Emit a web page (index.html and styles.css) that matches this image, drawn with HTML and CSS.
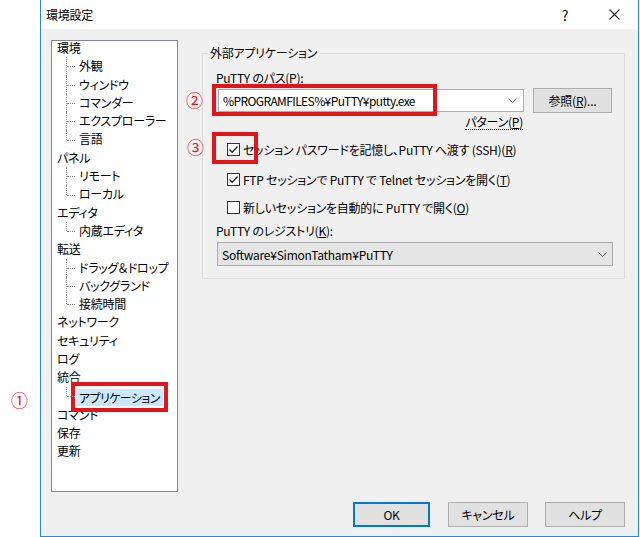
FILE: index.html
```html
<!DOCTYPE html>
<html lang="ja">
<head>
    <meta charset="utf-8">
    <title>環境設定</title>
    <link rel="stylesheet" href="styles.css">
</head>
<body>

<div class="screen">

    <!-- Dialog window -->
    <div class="window">
        <div class="titlebar">
            <span class="title">環境設定</span>
            <span class="help">?</span>
            <span class="close">
                <svg width="11" height="11" viewBox="0 0 11 11"><path d="M0.5 0.5 L10.5 10.5 M10.5 0.5 L0.5 10.5" stroke="#222" stroke-width="1.1" fill="none"/></svg>
            </span>
        </div>

        <div class="main">
            <!-- Settings tree -->
            <div class="tree">
                <ul>
                    <li><span class="item">環境</span>
                        <ul class="sub">
                            <li><span class="item">外観</span></li>
                            <li><span class="item">ウィンドウ</span></li>
                            <li><span class="item">コマンダー</span></li>
                            <li><span class="item">エクスプローラー</span></li>
                            <li><span class="item">言語</span></li>
                        </ul>
                    </li>
                    <li><span class="item">パネル</span>
                        <ul class="sub">
                            <li><span class="item">リモート</span></li>
                            <li><span class="item">ローカル</span></li>
                        </ul>
                    </li>
                    <li><span class="item">エディタ</span>
                        <ul class="sub">
                            <li><span class="item">内蔵エディタ</span></li>
                        </ul>
                    </li>
                    <li><span class="item">転送</span>
                        <ul class="sub">
                            <li><span class="item">ドラッグ＆ドロップ</span></li>
                            <li><span class="item">バックグランド</span></li>
                            <li><span class="item">接続時間</span></li>
                        </ul>
                    </li>
                    <li><span class="item">ネットワーク</span></li>
                    <li><span class="item">セキュリティ</span></li>
                    <li><span class="item">ログ</span></li>
                    <li><span class="item">統合</span>
                        <ul class="sub">
                            <li><span class="item selected">アプリケーション<span class="redbox box-tree"></span></span></li>
                        </ul>
                    </li>
                    <li><span class="item">コマンド</span></li>
                    <li><span class="item">保存</span></li>
                    <li><span class="item">更新</span></li>
                </ul>
            </div>

            <!-- External application settings -->
            <fieldset class="group">
                <legend>外部アプリケーション</legend>
                <div class="fields">
                    <div class="label label-path">PuTTY のパス(<u>P</u>):</div>
                    <div class="path-row">
                        <div class="combo combo-edit">
                            <span class="combo-text path-text">%PROGRAMFILES%¥PuTTY¥putty.exe</span>
                            <svg class="chevron" width="9" height="5" viewBox="0 0 9 5"><path d="M0.5 0.5 L4.5 4.5 L8.5 0.5" stroke="#555" fill="none"/></svg>
                        </div>
                        <button class="btn btn-browse">参照(<u>R</u>)...</button>
                        <span class="redbox box-path"></span>
                    </div>
                    <div class="pattern-row"><span class="pattern">パターン(<u>P</u>)</span></div>

                    <div class="check check-1">
                        <svg class="cb" width="13" height="13" viewBox="0 0 13 13"><rect x="0.5" y="0.5" width="12" height="12" fill="#fff" stroke="#333"/><path d="M2.5 6.5 L5.2 9.2 L10.5 3.5" stroke="#222" stroke-width="1.3" fill="none"/></svg>
                        <span>セッション パスワードを記憶し、PuTTY へ渡す (SSH)(<u>R</u>)</span>
                        <span class="redbox box-check"></span>
                    </div>
                    <div class="check check-2">
                        <svg class="cb" width="13" height="13" viewBox="0 0 13 13"><rect x="0.5" y="0.5" width="12" height="12" fill="#fff" stroke="#333"/><path d="M2.5 6.5 L5.2 9.2 L10.5 3.5" stroke="#222" stroke-width="1.3" fill="none"/></svg>
                        <span>FTP セッションで PuTTY で Telnet セッションを開く(<u>T</u>)</span>
                    </div>
                    <div class="check check-3">
                        <svg class="cb" width="13" height="13" viewBox="0 0 13 13"><rect x="0.5" y="0.5" width="12" height="12" fill="#fff" stroke="#333"/></svg>
                        <span>新しいセッションを自動的に PuTTY で開く(<u>O</u>)</span>
                    </div>

                    <div class="label label-reg">PuTTY のレジストリ(<u>K</u>):</div>
                    <div class="combo combo-list">
                        <span class="combo-text">Software¥SimonTatham¥PuTTY</span>
                        <svg class="chevron" width="9" height="5" viewBox="0 0 9 5"><path d="M0.5 0.5 L4.5 4.5 L8.5 0.5" stroke="#555" fill="none"/></svg>
                    </div>
                </div>
            </fieldset>
        </div>

        <!-- Dialog buttons -->
        <div class="buttons">
            <button class="btn btn-ok">OK</button>
            <button class="btn btn-cancel">キャンセル</button>
            <button class="btn btn-help">ヘルプ</button>
        </div>
    </div>

    <!-- Annotation marks -->
    <span class="mark mark-1">①</span>
    <span class="mark mark-2">②</span>
    <span class="mark mark-3">③</span>

</div>

</body>
</html>
```

FILE: styles.css
```css
body {
    margin: 0;
    background-color: #fff;
    font-family: "Noto Sans CJK JP", "Noto Sans", sans-serif;
    font-size: 12px;
    font-feature-settings: "palt";
    letter-spacing: -0.25px;
    color: #000;
}

.screen {
    position: relative;
    width: 640px;
    height: 537px;
    overflow: hidden;
}

.window {
    box-sizing: border-box;
    margin-left: 40px;
    width: 599px;
    height: 537px;
    border: 1px solid #2b86d6;
    border-top: none;
    background-color: #f0f0f0;
    display: flex;
    flex-direction: column;
}

/* Title bar */
.titlebar {
    height: 29px;
    background-color: #fff;
    display: flex;
    align-items: center;
}

.title {
    padding-left: 5px;
    flex: 1;
}

.help {
    font-size: 14px;
    width: 20px;
    text-align: center;
    margin-right: 34px;
}

.close {
    display: flex;
    margin-right: 18px;
}

/* Main area */
.main {
    display: flex;
    align-items: flex-start;
    padding: 11px 13px 0 10px;
}

.tree {
    box-sizing: border-box;
    width: 127px;
    height: 452px;
    border: 1px solid #828790;
    background-color: #fff;
    flex-shrink: 0;
}

.tree ul {
    list-style: none;
    margin: -2px 0 0 0;
    padding: 0 0 0 2px;
}

.tree li {
    line-height: 18.3px;
}

.tree ul.sub {
    margin: 0;
    padding: 0;
}

.tree ul.sub li {
    position: relative;
    padding-left: 22px;
}

.tree ul.sub li::before {
    content: "";
    position: absolute;
    left: 12px;
    top: 0;
    height: 100%;
    border-left: 1px dotted #9a9a9a;
}

.tree ul.sub li:last-child::before {
    height: 50%;
}

.tree ul.sub li::after {
    content: "";
    position: absolute;
    left: 13px;
    top: 50%;
    width: 8px;
    border-top: 1px dotted #9a9a9a;
}

.item {
    display: inline-block;
    padding: 0 3px;
    white-space: nowrap;
}

.item.selected {
    position: relative;
    background-color: #cce8ff;
    line-height: 17px;
    vertical-align: middle;
    letter-spacing: -0.6px;
}

/* Group box */
.group {
    margin: 5px 0 0 24px;
    padding: 0 11px 12px 5px;
    border: 1px solid #dcdcdc;
    flex: 1;
    min-width: 0;
}

.group legend {
    padding: 0 2px;
    line-height: 16px;
}

.fields {
    padding-left: 8px;
}

.label {
    line-height: 16px;
}

.label-path {
    margin-top: 9px;
}

.path-row {
    position: relative;
    display: flex;
    align-items: center;
    height: 25px;
    margin-top: 2px;
    margin-left: 2px;
}

.combo {
    box-sizing: border-box;
    display: flex;
    align-items: center;
    justify-content: space-between;
    padding: 0 6px 0 4px;
}

.path-text {
    letter-spacing: -0.6px;
}

.combo-edit {
    width: 306px;
    height: 23px;
    border: 1px solid #abadb3;
    background-color: #fff;
}

.combo-list {
    margin: 3px 0 0 1px;
    height: 24px;
    border: 1px solid #acacac;
    background-color: #e5e5e5;
    padding-right: 5px;
}

.btn {
    box-sizing: border-box;
    height: 25px;
    border: 1px solid #adadad;
    background-color: #e1e1e1;
    font-family: inherit;
    font-size: 12px;
    font-feature-settings: "palt";
    letter-spacing: -0.25px;
    color: #000;
    padding: 0;
}

.btn-browse {
    width: 79px;
    margin-left: 9px;
}

.pattern-row {
    width: 307px;
    text-align: right;
    line-height: 16px;
    margin-top: 1px;
}

.pattern {
    border-bottom: 1px dotted #000;
    line-height: 14px;
    display: inline-block;
}

.check {
    position: relative;
    display: flex;
    align-items: center;
    height: 18px;
    margin-left: 11px;
}

.check .cb {
    margin-right: 3px;
    flex-shrink: 0;
}

.check-1 {
    margin-top: 10px;
}

.check-2 {
    margin-top: 12px;
}

.check-3 {
    margin-top: 10px;
}

.label-reg {
    margin-top: 7px;
}

/* Dialog buttons */
.buttons {
    display: flex;
    justify-content: flex-end;
    margin-top: 10px;
    padding-right: 13px;
}

.btn-ok {
    width: 77px;
    border: 2px solid #0078d7;
}

.btn-cancel {
    width: 80px;
    margin-left: 18px;
}

.btn-help {
    width: 80px;
    margin-left: 17px;
}

/* Red annotation boxes */
.redbox {
    position: absolute;
    box-sizing: border-box;
    border: 4px solid #e5141b;
    pointer-events: none;
}

.box-tree {
    left: -5px;
    right: -5px;
    top: -7px;
    bottom: -6px;
}

.box-path {
    left: -6px;
    top: -4px;
    width: 225px;
    height: 32px;
}

.box-check {
    left: -15px;
    top: -8px;
    width: 46px;
    height: 32px;
}

.mark {
    position: absolute;
    color: #e5141b;
    font-size: 17px;
    line-height: 20px;
}

.mark-1 {
    left: 11px;
    top: 390px;
}

.mark-2 {
    left: 186px;
    top: 90px;
}

.mark-3 {
    left: 187px;
    top: 137px;
}
```
